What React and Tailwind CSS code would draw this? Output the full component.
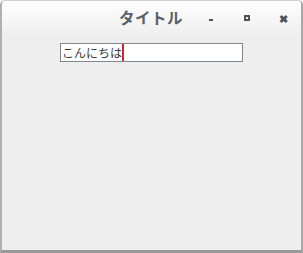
export default function App() {
  return (
    <div className="w-[303px] h-[253px] bg-white" style={{ fontFamily: '"Noto Sans CJK JP", "Liberation Sans", sans-serif' }}>
      <div className="w-full h-full flex flex-col rounded-t-[5px] border-l-2 border-r-2 border-t border-b-[3px] border-l-[#b0b0b0] border-r-[#a8a8a8] border-t-[#d0d0d0] border-b-[#999999] bg-[#eeeeee] overflow-hidden">
        {/* Title bar */}
        <div className="h-[34px] flex items-center bg-gradient-to-b from-white to-[#efefef] shrink-0">
          <div className="w-[117px] shrink-0" />
          <span className="w-[64px] shrink-0 text-[15.5px] font-semibold text-[#5a6065] leading-none tracking-[0.5px]">タイトル</span>
          <div className="flex-1 flex items-center">
            <span className="ml-[26px] w-[4px] h-[2px] mt-[4px] bg-[#4d5358]" />
            <span className="ml-[31px] w-[6px] h-[6px] border-2 border-[#4d5358]" />
            <span className="ml-[29px] text-[11px] font-bold text-[#4d5358] leading-none">✖</span>
          </div>
        </div>
        {/* Content */}
        <div className="pl-[58px] pt-[8px]">
          <div className="w-[183px] h-[19px] border border-[#7d8991] bg-white flex items-center px-[1px]">
            <span className="text-[12px] text-[#3a3a3a] leading-none">こんにちは</span>
            <span className="shrink-0 w-[1.5px] h-[17px] bg-[#d0282a]" />
          </div>
        </div>
      </div>
    </div>
  );
}
